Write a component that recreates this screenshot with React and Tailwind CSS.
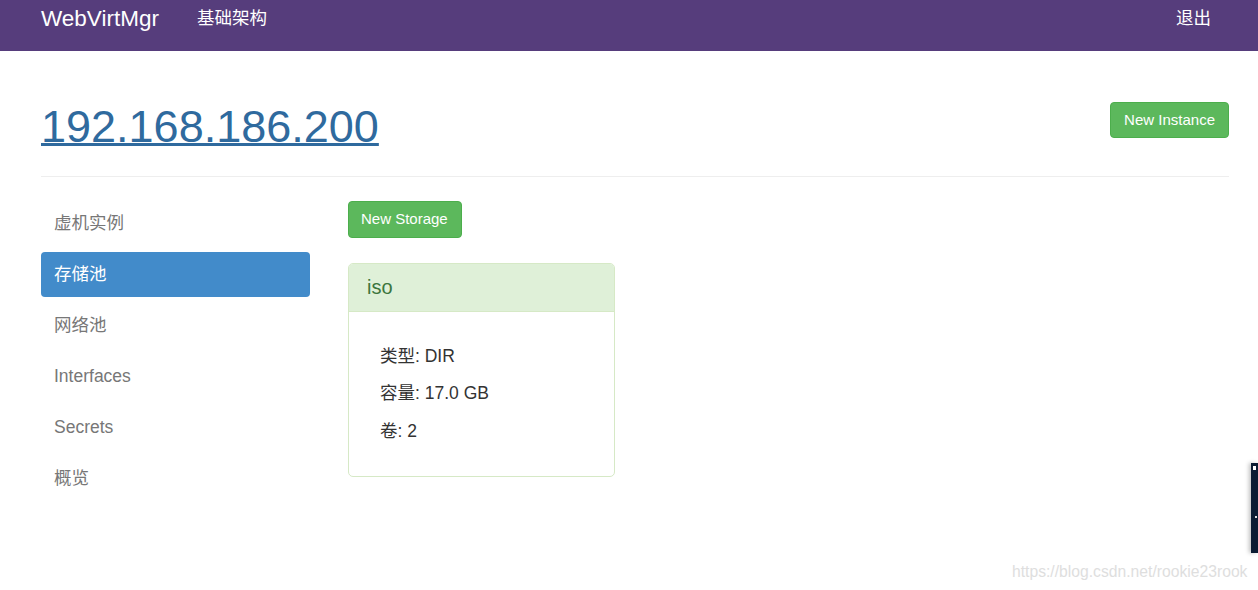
import { useState } from "react";

const menu = ["虚机实例", "存储池", "网络池", "Interfaces", "Secrets", "概览"];

export default function App() {
  const [active, setActive] = useState(1);

  return (
    <div
      className="relative h-[590px] overflow-hidden bg-white text-[#333]"
      style={{ fontFamily: '"Liberation Sans", Arial, "Noto Sans CJK SC", sans-serif' }}
    >
      {/* Navbar */}
      <nav className="h-[51px] bg-[#563d7c] flex items-center pl-[41px] pr-[47px] pb-[13px]">
        <a href="#" className="text-[22.5px] text-white leading-none">
          WebVirtMgr
        </a>
        <a href="#" className="ml-[38px] text-[17.5px] text-white leading-none">
          基础架构
        </a>
        <a href="#" className="ml-auto text-[17.5px] text-white leading-none">
          退出
        </a>
      </nav>

      <div className="pl-[41px] pr-[29px]">
        {/* Header */}
        <div className="flex items-start justify-between">
          <h1 className="text-[45px] leading-[49.5px] mt-[51px]">
            <a
              href="#"
              className="text-[#2f6a9e] underline decoration-[3px] underline-offset-[1px]"
            >
              192.168.186.200
            </a>
          </h1>
          <button className="mt-[51px] h-[36px] px-[13px] text-[15px] text-white bg-[#5cb85c] border border-[#4cae4c] rounded-[4px]">
            New Instance
          </button>
        </div>
        <div className="mt-[24px] border-t border-[#eee]" />

        {/* Body */}
        <div className="flex mt-[23px]">
          {/* Sidebar */}
          <ul className="w-[269px] mt-[1px] flex flex-col gap-[6px]">
            {menu.map((item, i) => (
              <li key={item}>
                <a
                  href="#"
                  onClick={(e) => {
                    e.preventDefault();
                    setActive(i);
                  }}
                  className={
                    i === active
                      ? "flex items-center h-[45px] pl-[13px] rounded-[4px] bg-[#428bca] text-white text-[17.5px]"
                      : "flex items-center h-[45px] pl-[13px] rounded-[4px] text-[#777] text-[17.5px]"
                  }
                >
                  {item}
                </a>
              </li>
            ))}
          </ul>

          {/* Main */}
          <div className="ml-[38px]">
            <button className="mt-[1px] h-[37px] pl-[12px] pr-[13px] text-[15px] text-white bg-[#5cb85c] border border-[#4cae4c] rounded-[4px]">
              New Storage
            </button>

            <div className="mt-[25px] w-[267px] border border-[#d6e9c6] rounded-[5px] overflow-hidden">
              <div className="h-[48px] flex items-center pl-[18px] bg-[#dff0d8] border-b border-[#d6e9c6] text-[20px] text-[#3c763d]">
                iso
              </div>
              <div className="pt-[26px] pb-[26px] pl-[31px] text-[17.5px] leading-[37.5px] text-[#333]">
                <p>类型: DIR</p>
                <p>容量: 17.0 GB</p>
                <p>卷: 2</p>
              </div>
            </div>
          </div>
        </div>
      </div>

      {/* Watermark */}
      <div className="absolute left-[1012px] top-[562px] text-[15.7px] leading-[20px] text-[#dedede] whitespace-nowrap">
        https://blog.csdn.net/rookie23rook
      </div>

      {/* Edge of another window */}
      <div className="absolute right-0 top-[463px] w-[7px] h-[90px] bg-[#0b1c33] shadow-[-2px_0_4px_rgba(0,0,0,0.25)]">
        <div className="ml-[2px] mt-[3px] w-[3px] h-[4px] bg-white" />
        <div className="ml-[4px] mt-[46px] w-[2px] h-[2px] bg-[#ddd]" />
      </div>
    </div>
  );
}
